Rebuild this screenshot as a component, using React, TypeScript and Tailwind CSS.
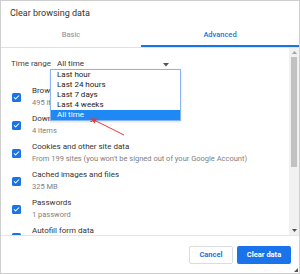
import { Check } from "lucide-react";

const items = [
    { label: "Browsing history", sub: "495 items" },
    { label: "Download history", sub: "4 items" },
    { label: "Cookies and other site data", sub: "From 199 sites (you won't be signed out of your Google Account)" },
    { label: "Cached images and files", sub: "325 MB" },
    { label: "Passwords", sub: "1 password" },
    { label: "Autofill form data", sub: "2 addresses, 14 other suggestions" },
];

const ranges = ["Last hour", "Last 24 hours", "Last 7 days", "Last 4 weeks", "All time"];

export default function App() {
    return (
        <div className="relative w-[300px] h-[274px] bg-white border border-[#cfcfcf] flex flex-col font-['Roboto','Liberation_Sans',sans-serif] text-[#333]">
            {/* Titel */}
            <div className="h-[18px] pt-[6px] pl-[9px] text-[9px] leading-[12px] text-[#333]">Clear browsing data</div>

            {/* Tabs */}
            <div className="flex border-b border-[#e0e0e0]">
                <div className="w-[140px] h-[28px] pt-[6px] border-b-2 border-transparent flex items-center justify-center text-[7.5px] font-medium text-[#a0a0a0]">
                    Basic
                </div>
                <div className="flex-1 h-[28px] pt-[6px] border-b-2 border-[#1a73e8] flex items-center justify-center text-[7.5px] font-medium text-[#1a73e8]">
                    Advanced
                </div>
            </div>

            {/* Inhalt */}
            <div className="h-[187px] flex overflow-hidden">
                <div className="flex-1 pt-[10px] pl-[10px] overflow-hidden">
                    <div className="flex h-[13px] items-start">
                        <span className="w-[39px] shrink-0 whitespace-nowrap text-[8px] leading-[12px] text-[#444]">Time range</span>
                        <div className="relative w-[124px] h-[13px] border-b border-[#1a73e8] pl-[7px] flex items-start justify-between pr-[5px]">
                            <span className="text-[8px] leading-[12px] text-[#333]">All time</span>
                            <svg width="6" height="4" viewBox="0 0 6 4" className="mt-[5px]">
                                <path d="M0 0 L6 0 L3 3.5 Z" fill="#555" />
                            </svg>
                            <div className="absolute left-0 top-[11px] w-[131px] z-10 bg-white border border-[#8ab4f0] shadow-sm">
                                {ranges.map((r) => (
                                    <div
                                        key={r}
                                        className={`h-[10px] pl-[6px] text-[8px] leading-[10px] ${
                                            r === "All time" ? "bg-[#1e88f5] text-white" : "text-[#222]"
                                        }`}
                                    >
                                        {r}
                                    </div>
                                ))}
                            </div>
                        </div>
                    </div>

                    <div className="mt-[14px] flex flex-col gap-[4px]">
                        {items.map((it) => (
                            <div key={it.label} className="flex items-center">
                                <div className="ml-[1px] w-[9px] h-[9px] rounded-[1.5px] bg-[#1a73e8] flex items-center justify-center shrink-0">
                                    <Check size={7} color="white" strokeWidth={3.5} />
                                </div>
                                <div className="ml-[11px] flex flex-col whitespace-nowrap">
                                    <span className="text-[8px] leading-[12px] text-[#333]">{it.label}</span>
                                    <span className="text-[7.5px] leading-[12px] text-[#808080]">{it.sub}</span>
                                </div>
                            </div>
                        ))}
                    </div>
                </div>

                {/* Scrollbar */}
                <div className="w-[10px] bg-[#f1f1f1] flex flex-col">
                    <div className="h-[9px] flex items-center justify-center">
                        <svg width="5" height="3" viewBox="0 0 5 3">
                            <path d="M0 3 L5 3 L2.5 0 Z" fill="#a3a3a3" />
                        </svg>
                    </div>
                    <div className="h-[110px] mx-[2px] bg-[#c1c1c1]" />
                    <div className="flex-1" />
                    <div className="h-[9px] flex items-center justify-center">
                        <svg width="5" height="3" viewBox="0 0 5 3">
                            <path d="M0 0 L5 0 L2.5 3 Z" fill="#505050" />
                        </svg>
                    </div>
                </div>
            </div>

            {/* Fußzeile */}
            <div className="flex-1 border-t border-[#e6e6e6] flex items-center justify-end gap-[4px] pr-[8px]">
                <button className="w-[44px] h-[18px] rounded-[2px] border border-[#dadce0] bg-white text-[7.5px] font-bold text-[#1a73e8]">
                    Cancel
                </button>
                <button className="w-[54px] h-[18px] rounded-[2px] bg-[#1a73e8] text-[7.5px] font-bold text-white">
                    Clear data
                </button>
            </div>

            {/* Pfeil */}
            <svg className="absolute left-[86px] top-[114px] z-20" width="40" height="24" viewBox="0 0 40 24">
                <line x1="37" y1="20" x2="7" y2="5" stroke="#e53935" strokeWidth="1" />
                <path d="M3 3.5 L10 3.6 L7.6 8.3 Z" fill="#e53935" />
            </svg>

            {/* Resize-Griff */}
            <svg className="absolute right-[1px] bottom-[1px]" width="4" height="4" viewBox="0 0 4 4">
                <path d="M4 0 L4 4 L0 4 Z" fill="#555" />
            </svg>
        </div>
    );
}
